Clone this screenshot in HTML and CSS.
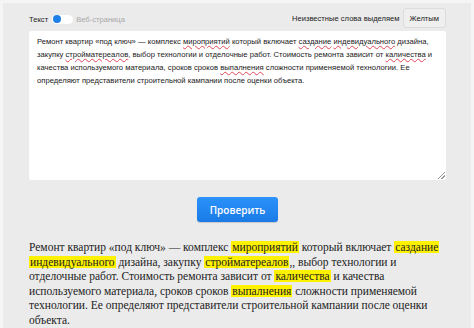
FILE: index.html
```html
<!DOCTYPE html>
<html lang="ru">
<head>
<meta charset="utf-8">
<link rel="stylesheet" href="styles.css">
</head>
<body>
<div class="panel">
  <div class="toolbar">
    <div class="mode">
      <span class="mode-on">Текст</span>
      <span class="switch"><span class="knob"></span></span>
      <span class="mode-off">Веб-страница</span>
    </div>
    <div class="color-pick">
      <span class="color-label">Неизвестные слова выделяем</span>
      <span class="color-btn">Желтым</span>
    </div>
  </div>
  <div class="editor">
    <div class="editor-text">Ремонт квартир «под ключ» — комплекс <span class="err">мироприятий</span> который включает <span class="err">саздание</span> <span class="err">индевидуального</span> дизайна, закупку <span class="err">стройматереалов</span>, выбор технологии и отделочные работ. Стоимость ремонта зависит от <span class="err">каличества</span> и качества используемого материала, сроков сроков <span class="err">выпалнения</span> сложности применяемой технологии. Ее определяют представители строительной кампании после оценки объекта.</div>
    <span class="grip"></span>
  </div>
  <div class="actions">
    <button class="check-btn">Проверить</button>
  </div>
  <p class="result">Ремонт квартир «под ключ» — комплекс <mark>мироприятий</mark> который включает <mark>саздание</mark> <mark>индевидуального</mark> дизайна, закупку <mark>стройматереалов</mark>,, выбор технологии и отделочные работ. Стоимость ремонта зависит от <mark>каличества</mark> и качества используемого материала, сроков сроков <mark>выпалнения</mark> сложности применяемой технологии. Ее определяют представители строительной кампании после оценки объекта.</p>
</div>
</body>
</html>
```
FILE: styles.css
```css
html, body {
  margin: 0;
  padding: 0;
  background: #f5f5f5;
  height: 100%;
  overflow: hidden;
}
.panel {
  margin: 3px 3px 0 3px;
  background: #ebebeb;
  padding: 4px 25px 0 26px;
  min-height: 340px;
  font-family: "Liberation Sans", Arial, sans-serif;
  color: #222;
}
.toolbar {
  height: 22px;
  margin-bottom: 2px;
  display: flex;
  align-items: center;
  justify-content: space-between;
  font-size: 7.6px;
}
.mode {
  display: flex;
  align-items: center;
  margin-top: 2px;
}
.mode-on { color: #1e1e1e; }
.switch {
  width: 19px;
  height: 9px;
  margin: 0 3px 0 4px;
  background: #fff;
  border-radius: 5px;
  display: flex;
  align-items: center;
  padding: 0 1px;
}
.knob {
  width: 8px;
  height: 8px;
  border-radius: 50%;
  background: #1e7fe8;
}
.mode-off { color: #a8a8a8; }
.color-pick {
  display: flex;
  align-items: center;
  gap: 3px;
}
.color-btn {
  height: 18px;
  padding: 0 6px;
  display: flex;
  align-items: center;
  border: 1px solid #dcdcdc;
  border-radius: 3px;
  background: #efefef;
}
.editor {
  position: relative;
  height: 149px;
  background: #fff;
  border-radius: 2px;
  box-sizing: border-box;
  padding: 4px 8px;
}
.editor-text {
  font-size: 7.65px;
  line-height: 13px;
  color: #1a1a1a;
}
.err {
  text-decoration: underline wavy #e0485a;
  text-decoration-thickness: 1px;
  text-underline-offset: 1px;
}
.grip {
  position: absolute;
  right: 1px;
  bottom: 1px;
  width: 7px;
  height: 7px;
  background: linear-gradient(135deg, transparent 45%, #9a9a9a 45%, #9a9a9a 55%, transparent 55%, transparent 70%, #9a9a9a 70%, #9a9a9a 80%, transparent 80%);
}
.actions {
  display: flex;
  justify-content: center;
  margin-top: 17px;
}
.check-btn {
  width: 81px;
  height: 25px;
  border: none;
  border-radius: 3px;
  background: linear-gradient(#2b93fb, #1a7ae6);
  color: #fff;
  font-family: "Open Sans", sans-serif;
  font-weight: 600;
  font-size: 10px;
  box-shadow: 0 1px 1px rgba(0,0,0,0.15);
}
.result {
  margin: 18px 0 0 0;
  font-family: "Liberation Serif", serif;
  font-size: 11.5px;
  line-height: 14.6px;
  color: #222;
}
mark {
  background: #fff200;
  color: inherit;
  padding: 0 1px;
}
```
